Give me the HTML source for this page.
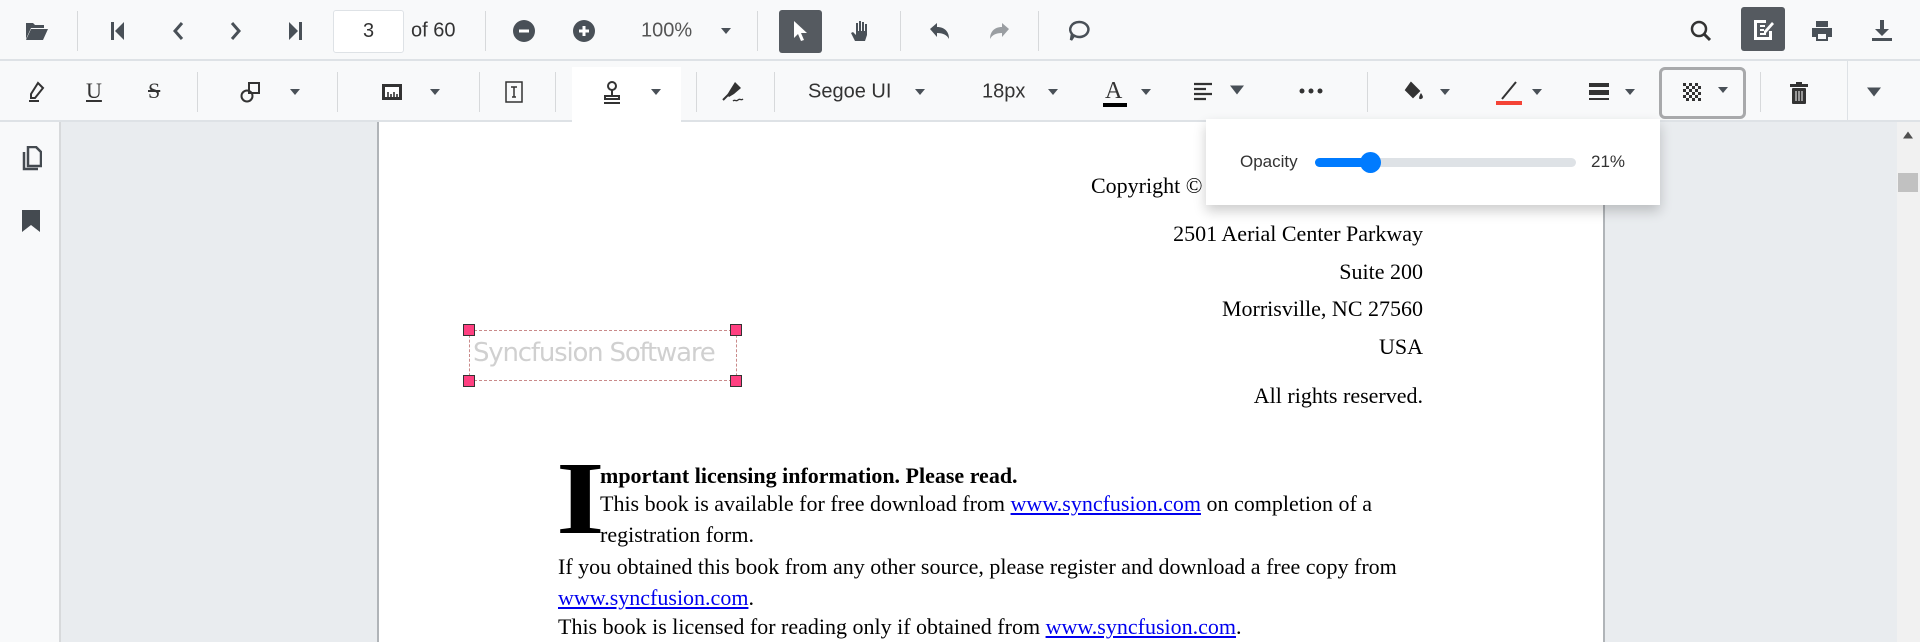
<!DOCTYPE html>
<html><head><style>
*{margin:0;padding:0;box-sizing:border-box}
body{width:1920px;height:642px;overflow:hidden;background:#e9ecef;font-family:"Liberation Sans",sans-serif;position:relative}
.a{position:absolute}
.tb{left:0;width:1920px;background:#f8f9fa;border-bottom:2px solid #dee2e6}
.sep{position:absolute;width:1px;height:40px;background:#d7d9db}
.ic{position:absolute;transform:translate(-50%,-50%)}
.car{position:absolute;width:0;height:0;border-left:5px solid transparent;border-right:5px solid transparent;border-top:6px solid #495057;transform:translate(-50%,-50%)}
.t{position:absolute;color:#333;font-size:20px;transform:translateY(-50%)}
.pg{font-family:"Liberation Serif",serif;font-size:22px;color:#000;position:absolute;white-space:nowrap}
.r{right:497px}
a{color:#00e;text-decoration:underline}
.h{position:absolute;width:12px;height:12px;background:#ff4081;border:1px solid #333}
</style></head><body>
<div class="a tb" style="top:0;height:61px"></div>
<div class="a tb" style="top:61px;height:61px"></div>
<!-- row1 -->
<svg class="ic" style="left:37px;top:31px" width="24" height="20" viewBox="0 0 24 20"><path d="M1 2h7l2 2h9v3H6L1 18z M6 8h17l-5 11H1z" fill="#495057"/></svg>
<div class="sep" style="left:77px;top:11px"></div>
<svg class="ic" style="left:118px;top:31px" width="14" height="18"><rect x="0" y="0" width="3" height="18" fill="#495057"/><path d="M4 9L13 0v18z" fill="#495057"/></svg>
<svg class="ic" style="left:178px;top:31px" width="12" height="18"><path d="M10 1L3 9l7 8" stroke="#495057" stroke-width="3" fill="none"/></svg>
<svg class="ic" style="left:236px;top:31px" width="12" height="18"><path d="M2 1l7 8-7 8" stroke="#495057" stroke-width="3" fill="none"/></svg>
<svg class="ic" style="left:296px;top:31px" width="14" height="18"><path d="M0 0l9 9-9 9z" fill="#495057"/><rect x="10" y="0" width="3" height="18" fill="#495057"/></svg>
<div class="a" style="left:333px;top:10px;width:71px;height:43px;background:#fff;border:1px solid #dee2e6;border-radius:3px;text-align:center;line-height:41px;font-size:20px;color:#333">3</div>
<div class="t" style="left:411px;top:31px">of 60</div>
<div class="sep" style="left:485px;top:11px"></div>
<svg class="ic" style="left:524px;top:31px" width="22" height="22"><circle cx="11" cy="11" r="11" fill="#495057"/><rect x="6" y="9.5" width="10" height="3" fill="#fff"/></svg>
<svg class="ic" style="left:584px;top:31px" width="22" height="22"><circle cx="11" cy="11" r="11" fill="#495057"/><rect x="6" y="9.5" width="10" height="3" fill="#fff"/><rect x="9.5" y="6" width="3" height="10" fill="#fff"/></svg>
<div class="t" style="left:641px;top:31px;color:#555">100%</div>
<div class="car" style="left:726px;top:31px"></div>
<div class="sep" style="left:757px;top:11px"></div>
<div class="a" style="left:779px;top:10px;width:43px;height:43px;background:#555a60;border-radius:3px"></div>
<svg class="ic" style="left:800px;top:31px" width="16" height="22"><path d="M2 1v17l4-4 3 7 3-1-3-7h6z" fill="#fff"/></svg>
<svg class="ic" style="left:860px;top:31px" width="20" height="22"><path d="M5 21l-4-8 2-1 3 3V3h2v8h1V1h2v10h1V2h2v9h1V4h2v11l-2 6z" fill="#495057"/></svg>
<div class="sep" style="left:900px;top:11px"></div>
<svg class="ic" style="left:940px;top:31px" width="22" height="18"><path d="M1 7l7-6v4c8 0 12 5 12 12-2-4-6-6-12-6v4z" fill="#495057"/></svg>
<svg class="ic" style="left:999px;top:31px" width="22" height="18"><path d="M21 7l-7-6v4C6 5 2 10 2 17c2-4 6-6 12-6v4z" fill="#9a9ea2"/></svg>
<div class="sep" style="left:1038px;top:11px"></div>
<svg class="ic" style="left:1079px;top:31px" width="24" height="22"><path d="M12 2a9 7.5 0 1 1-5 13.5L4 20l1-6A9 7.5 0 0 1 12 2z" stroke="#495057" stroke-width="2.5" fill="none"/></svg>
<svg class="ic" style="left:1701px;top:31px" width="22" height="22"><circle cx="9" cy="9" r="7" stroke="#333" stroke-width="2.5" fill="none"/><path d="M14 14l6 6" stroke="#333" stroke-width="3"/></svg>
<div class="a" style="left:1741px;top:7px;width:44px;height:44px;background:#555a60;border-radius:3px"></div>
<svg class="ic" style="left:1763px;top:29px" width="22" height="22"><path d="M2 2h12v3H5v14h12v-6h3v9H2z" fill="#fff"/><path d="M8 8h5M8 12h4M8 16h6" stroke="#fff" stroke-width="2"/><path d="M12 13l8-9 2 2-8 9h-2z" fill="#fff"/></svg>
<svg class="ic" style="left:1822px;top:31px" width="22" height="22"><path d="M5 1h12v6H5z" fill="#495057"/><path d="M1 8h20v9h-4v4H5v-4H1z" fill="#495057"/><rect x="7" y="14" width="8" height="5" fill="#f8f9fa"/></svg>
<svg class="ic" style="left:1882px;top:31px" width="22" height="22"><path d="M9 0h4v9h5l-7 7-7-7h5z" fill="#495057"/><rect x="1" y="18" width="20" height="3" fill="#495057"/></svg>
<!-- row2 -->
<svg class="ic" style="left:37px;top:92px" width="18" height="22"><path d="M10 2l5 5-8 10H3v-4z" stroke="#333" stroke-width="2" fill="none"/><rect x="1" y="19" width="10" height="2" fill="#333"/></svg>
<div class="a" style="left:86px;top:78px;font-size:22px;color:#333;text-decoration:underline;font-family:'Liberation Serif',serif">U</div>
<div class="a" style="left:148px;top:78px;font-size:22px;color:#333;text-decoration:line-through;font-family:'Liberation Serif',serif">S</div>
<div class="sep" style="left:197px;top:72px"></div>
<svg class="ic" style="left:251px;top:92px" width="22" height="22"><circle cx="7" cy="15" r="5.5" stroke="#333" stroke-width="2" fill="none"/><rect x="9" y="2" width="10" height="10" stroke="#333" stroke-width="2" fill="none"/></svg>
<div class="car" style="left:295px;top:92px"></div>
<div class="sep" style="left:337px;top:72px"></div>
<svg class="ic" style="left:392px;top:92px" width="22" height="18"><rect x="1" y="1" width="20" height="16" fill="#333"/><rect x="4" y="4" width="14" height="10" fill="#fff"/><path d="M7 14v-5M10 14v-3M13 14v-5M16 14v-3" stroke="#333" stroke-width="1.6"/></svg>
<div class="car" style="left:435px;top:92px"></div>
<div class="sep" style="left:479px;top:72px"></div>
<svg class="ic" style="left:514px;top:92px" width="20" height="24"><rect x="2" y="2" width="16" height="20" stroke="#333" stroke-width="1.5" fill="none"/><path d="M7 7h6M10 7v10M8 17h4" stroke="#333" stroke-width="1.5"/></svg>
<div class="sep" style="left:555px;top:72px"></div>
<div class="a" style="left:572px;top:67px;width:109px;height:55px;background:#fff"></div>
<svg class="ic" style="left:612px;top:92px" width="20" height="24"><circle cx="10" cy="6" r="4" stroke="#333" stroke-width="2" fill="none"/><path d="M10 10v6M3 16h14v3H3z" stroke="#333" stroke-width="2" fill="none"/><rect x="2" y="22" width="16" height="2" fill="#333"/></svg>
<div class="car" style="left:656px;top:92px"></div>
<div class="sep" style="left:696px;top:72px"></div>
<svg class="ic" style="left:733px;top:92px" width="24" height="24"><path d="M14 2l6 6-7 6-5 3-2-2 3-5z" fill="#333"/><path d="M2 20l6-6" stroke="#333" stroke-width="2"/><path d="M12 21c2-2 3 1 5-1s3 1 5-1" stroke="#333" stroke-width="1.3" fill="none"/></svg>
<div class="sep" style="left:774px;top:72px"></div>
<div class="t" style="left:808px;top:92px">Segoe UI</div>
<div class="car" style="left:920px;top:92px"></div>
<div class="t" style="left:982px;top:92px">18px</div>
<div class="car" style="left:1053px;top:92px"></div>
<div class="a" style="left:1105px;top:78px;font-size:24px;color:#333;font-family:'Liberation Serif',serif">A</div>
<div class="a" style="left:1103px;top:103px;width:24px;height:4px;background:#000"></div>
<div class="car" style="left:1146px;top:92px"></div>
<svg class="ic" style="left:1204px;top:92px" width="20" height="20"><path d="M0 2h18M0 7h12M0 12h18M0 17h12" stroke="#333" stroke-width="2.2"/></svg>
<div class="car" style="left:1237px;top:90px;border-left-width:7px;border-right-width:7px;border-top-width:9px"></div>
<svg class="ic" style="left:1311px;top:91px" width="24" height="6"><circle cx="3" cy="3" r="2.5" fill="#333"/><circle cx="12" cy="3" r="2.5" fill="#333"/><circle cx="21" cy="3" r="2.5" fill="#333"/></svg>
<div class="sep" style="left:1367px;top:72px"></div>
<svg class="ic" style="left:1414px;top:92px" width="22" height="22"><path d="M8 2l8 8-6 6-7-7z" stroke="#333" stroke-width="2" fill="#333"/><path d="M18 12c2 3 3 5 0 6s-2-3 0-6z" fill="#333"/></svg>
<div class="car" style="left:1445px;top:92px"></div>
<svg class="ic" style="left:1509px;top:90px" width="20" height="20"><path d="M17 2L3 19" stroke="#333" stroke-width="2"/></svg>
<div class="a" style="left:1496px;top:101px;width:26px;height:4px;background:#f44336"></div>
<div class="car" style="left:1537px;top:92px"></div>
<svg class="ic" style="left:1599px;top:92px" width="20" height="20"><rect x="0" y="1" width="20" height="4" fill="#333"/><rect x="0" y="8" width="20" height="5" fill="#333"/><rect x="0" y="16" width="20" height="2" fill="#333"/></svg>
<div class="car" style="left:1630px;top:92px"></div>
<div class="a" style="left:1659px;top:67px;width:87px;height:52px;border:3px solid #a8a9ab;border-radius:6px;background:#f8f9fa"></div>
<svg class="ic" style="left:1692px;top:92px" width="18" height="18"><path d="M0 0h3v3H0zM6 0h3v3H6zM12 0h3v3h-3zM3 3h3v3H3zM9 3h3v3H9zM15 3h3v3h-3zM0 6h3v3H0zM6 6h3v3H6zM12 6h3v3h-3zM3 9h3v3H3zM9 9h3v3H9zM15 9h3v3h-3zM0 12h3v3H0zM6 12h3v3H6zM12 12h3v3h-3zM3 15h3v3H3zM9 15h3v3H9zM15 15h3v3h-3z" fill="#333"/></svg>
<div class="car" style="left:1723px;top:90px"></div>
<div class="sep" style="left:1760px;top:72px"></div>
<svg class="ic" style="left:1799px;top:93px" width="18" height="22"><rect x="0" y="2" width="18" height="3" fill="#333"/><rect x="6" y="0" width="6" height="2" fill="#333"/><rect x="2" y="6" width="14" height="16" rx="1" fill="#333"/><path d="M6 9v10M9 9v10M12 9v10" stroke="#fff" stroke-width="1"/></svg>
<div class="a" style="left:1847px;top:61px;width:1px;height:60px;background:#dee2e6"></div>
<div class="car" style="left:1874px;top:92px;border-left-width:7px;border-right-width:7px;border-top-width:9px"></div>
<!-- sidebar -->
<div class="a" style="left:0;top:122px;width:61px;height:520px;background:#f8f9fa;border-right:2px solid #d7d9db"></div>
<svg class="ic" style="left:31px;top:159px" width="22" height="26"><path d="M4 6v17h14" stroke="#444a50" stroke-width="2.5" fill="none"/><path d="M8 1h8l5 5v14H8z" stroke="#444a50" stroke-width="2.5" fill="none"/></svg>
<svg class="ic" style="left:31px;top:221px" width="18" height="22"><path d="M0 0h18v22l-9-7-9 7z" fill="#444a50"/></svg>
<!-- page -->
<div class="a" style="left:377px;top:122px;width:1228px;height:520px;background:#fff;border-left:2px solid #b0b4b8;border-right:2px solid #b0b4b8"></div>
<div class="pg" style="left:1091px;top:173px">Copyright © 2014 by Syncfusion Inc.</div>
<div class="pg r" style="top:221px">2501 Aerial Center Parkway</div>
<div class="pg r" style="top:259px">Suite 200</div>
<div class="pg r" style="top:296px">Morrisville, NC 27560</div>
<div class="pg r" style="top:334px">USA</div>
<div class="pg r" style="top:383px">All rights reserved.</div>
<div class="pg" style="left:556px;top:447px;font-size:104px;line-height:104px;font-weight:bold;transform:scaleX(1.2);transform-origin:left top">I</div>
<div class="pg" style="left:600px;top:463px;font-weight:bold">mportant licensing information. Please read.</div>
<div class="pg" style="left:600px;top:491px">This book is available for free download from <a>www.syncfusion.com</a> on completion of a</div>
<div class="pg" style="left:600px;top:522px">registration form.</div>
<div class="pg" style="left:558px;top:554px">If you obtained this book from any other source, please register and download a free copy from</div>
<div class="pg" style="left:558px;top:585px"><a>www.syncfusion.com</a>.</div>
<div class="pg" style="left:558px;top:614px">This book is licensed for reading only if obtained from <a>www.syncfusion.com</a>.</div>
<!-- annotation -->
<div class="a" style="left:469px;top:330px;width:268px;height:51px;border:1px dashed #c98a8a"></div>
<div class="a" style="left:473px;top:338px;font-size:26px;color:#d0d0d0;font-family:'DejaVu Sans',sans-serif;letter-spacing:-1.2px">Syncfusion Software</div>
<div class="h" style="left:463px;top:324px"></div><div class="h" style="left:730px;top:324px"></div>
<div class="h" style="left:463px;top:375px"></div><div class="h" style="left:730px;top:375px"></div>
<!-- popup -->
<div class="a" style="left:1206px;top:119px;width:454px;height:86px;background:#fff;box-shadow:0 6px 12px rgba(0,0,0,.2)"></div>
<div class="t" style="left:1240px;top:162px;font-size:17px">Opacity</div>
<div class="a" style="left:1315px;top:158px;width:261px;height:9px;border-radius:5px;background:#dee2e6"></div>
<div class="a" style="left:1315px;top:158px;width:55px;height:9px;border-radius:5px;background:#007bff"></div>
<div class="a" style="left:1360px;top:152px;width:21px;height:21px;border-radius:50%;background:#007bff"></div>
<div class="t" style="left:1591px;top:162px;font-size:17px">21%</div>
<!-- scrollbar -->
<div class="a" style="left:1897px;top:122px;width:23px;height:520px;background:#f1f1f1"></div>
<div class="car" style="left:1908px;top:135px;border-top:0;border-bottom:7px solid #505050"></div>
<div class="a" style="left:1898px;top:173px;width:20px;height:19px;background:#c1c1c1"></div>
</body></html>
